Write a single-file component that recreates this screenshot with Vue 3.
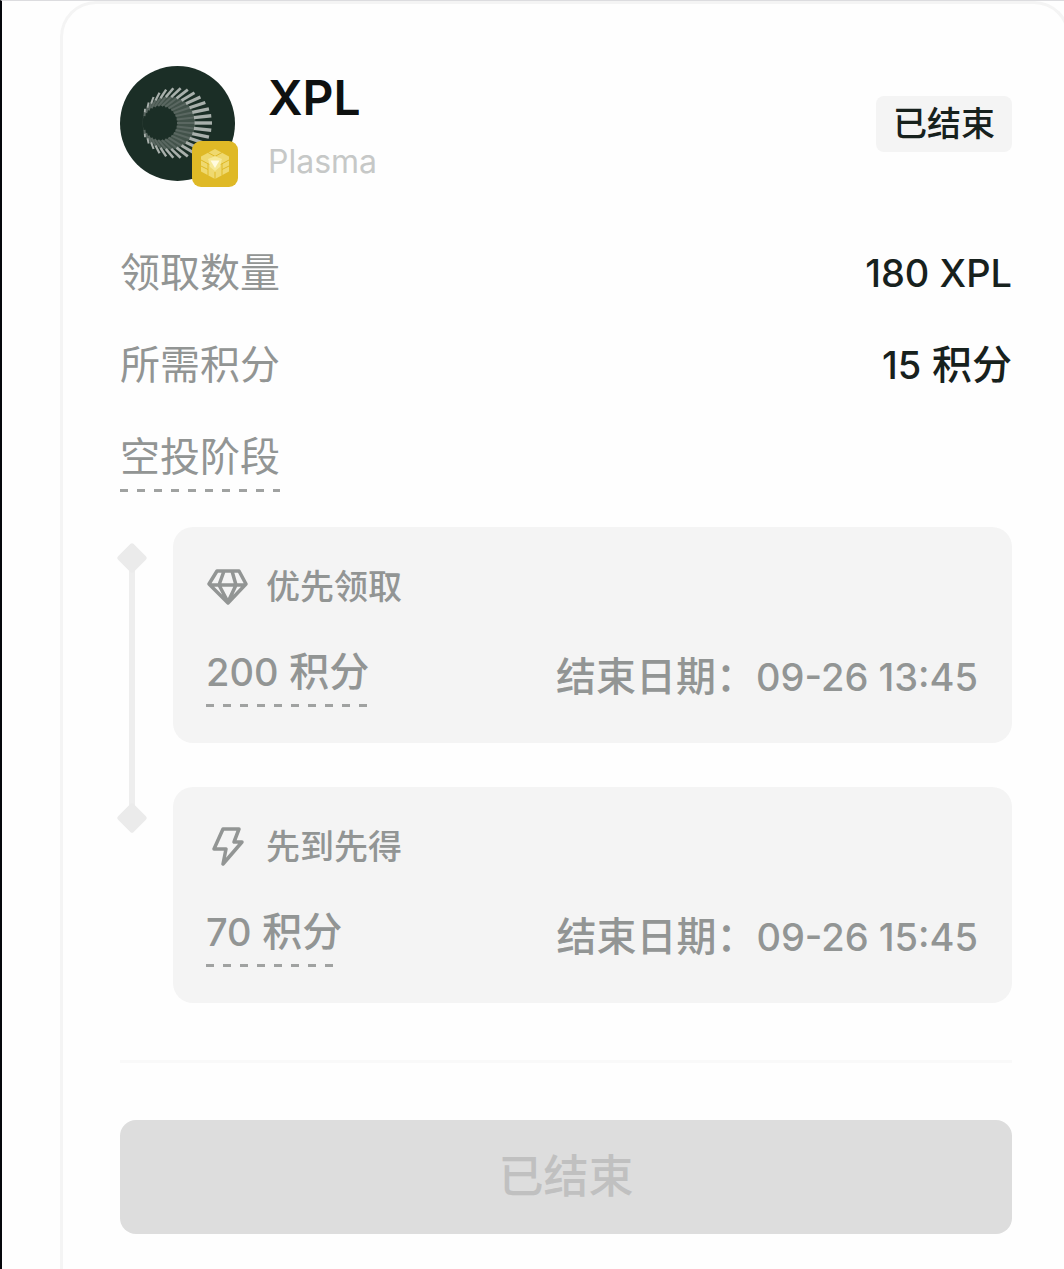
<script setup>
const token = { symbol: 'XPL', name: 'Plasma', status: '已结束' }

const stages = [
  { icon: 'diamond', title: '优先领取', points: 200, date: '09-26 13:45' },
  { icon: 'bolt', title: '先到先得', points: 70, date: '09-26 15:45' },
]

// each ray joins the same angle on the small inner and the bigger outer circle
const inner = { x: 40, r: 17 }
const outer = { x: 57, r: 35 }
const rays = []
for (let deg = -156; deg <= 156; deg += 12) {
  const a = (deg * Math.PI) / 180
  const at = (t) => {
    const x = inner.x + (outer.x - inner.x) * t
    const r = inner.r + (outer.r - inner.r) * t
    return `${(x + r * Math.cos(a)).toFixed(2)} ${(57 + r * Math.sin(a)).toFixed(2)}`
  }
  rays.push({
    deg,
    dim: `M${at(0)}L${at(0.5)}`,
    lit: `M${at(0.5)}L${at(1)}`,
    width: (2.6 + 0.8 * Math.cos(a)).toFixed(2),
  })
}
</script>

<template>
  <div class="page">
    <main class="card">
      <header class="head">
        <div class="avatar">
          <svg class="logo" viewBox="0 0 115 115" aria-hidden="true">
            <circle cx="57.5" cy="57.5" r="57.5" fill="#1b2e26" />
            <circle cx="49" cy="57" r="26.5" fill="#42524a" />
            <circle cx="40" cy="57" r="17.5" fill="#1b2e26" />
            <g fill="none">
              <path v-for="r in rays" :key="r.deg" :d="r.dim" stroke="#5a6761" stroke-width="2" />
              <path v-for="r in rays" :key="r.deg" :d="r.lit" stroke="#a9b0ac" :stroke-width="r.width" />
            </g>
          </svg>
          <svg class="chain" viewBox="0 0 46 46" aria-hidden="true">
            <rect width="46" height="46" rx="9" fill="#dfb926" />
            <path d="M23 8L37 15.500V30.500L23 38L9 30.500V15.500Z" fill="#efd96f" />
            <g fill="none" stroke="#dfb926" stroke-width="1">
              <path d="M9 19L23 26.500L37 19M23 31V38M16 11.500L29.500 19M30 11.500L16.500 19M16 23V34.500M30 23V34.500M9 25L16 28.500M37 25L30 28.500" />
            </g>
            <path d="M16 18L23 15L30 18L28 26L23 30L18 26Z" fill="#f6e998" />
            <path d="M18.500 19.500H27.500L23 27Z" fill="#fffbe0" />
          </svg>
        </div>
        <div class="names">
          <h1>{{ token.symbol }}</h1>
          <p>{{ token.name }}</p>
        </div>
        <span class="tag">{{ token.status }}</span>
      </header>

      <dl class="info">
        <div class="row">
          <dt>领取数量</dt>
          <dd><span class="num">180 XPL</span></dd>
        </div>
        <div class="row">
          <dt>所需积分</dt>
          <dd><span class="num">15</span> 积分</dd>
        </div>
      </dl>

      <h2 class="phase"><span class="dashed">空投阶段</span></h2>

      <ol class="stages">
        <li v-for="s in stages" :key="s.title" class="stage">
          <div class="rail"><i class="node"></i></div>
          <section class="box">
            <h3>
              <svg v-if="s.icon === 'diamond'" viewBox="0 0 42 42" aria-hidden="true">
                <path d="M11 5H33L40 18L22 37L3 18Z M4 19H39 M18 5L13 19L22 36L30 19L26 5" />
              </svg>
              <svg v-else viewBox="0 0 42 42" aria-hidden="true">
                <path d="M17 3H33L28 16H36L17 38L20 23H8Z" />
              </svg>
              {{ s.title }}
            </h3>
            <div class="line">
              <span class="dashed"><span class="num">{{ s.points }}</span> 积分</span>
              <span class="date">结束日期：<time class="num">{{ s.date }}</time></span>
            </div>
          </section>
        </li>
      </ol>

      <hr />

      <button type="button" class="claim" disabled>{{ token.status }}</button>
    </main>
  </div>
</template>

<style>
body {
  margin: 0;
  background: #fefefe;
}
</style>

<style scoped>
.page {
  box-sizing: border-box;
  min-height: 100vh;
  padding-left: 58px;
  border-top: 1px solid #dcdcdf;
  border-left: 2px solid #05070c;
  overflow: hidden;
  font-family: Inter, "Noto Sans CJK SC", sans-serif;
  font-size: 40px;
  font-weight: 400;
  line-height: 56px;
  color: #929594;
}
.card {
  box-sizing: border-box;
  min-height: 100vh;
  margin-right: -6px;
  padding: 51px 55px 32px 57px;
  border: 3px solid #f4f4f4;
  border-bottom: 0;
  border-radius: 36px 36px 0 0;
  background: #fefefe;
}
.num {
  font-size: 38px;
  line-height: 1;
}

/* header */
.head {
  display: flex;
  align-items: center;
  gap: 33px;
}
.avatar {
  position: relative;
  width: 115px;
  height: 115px;
}
.logo {
  display: block;
  width: 100%;
}
.chain {
  position: absolute;
  right: -3px;
  bottom: -6px;
  width: 46px;
}
.names {
  flex: 1;
  padding-top: 13px;
}
h1 {
  margin: 0 0 4px;
  font-size: 48px;
  font-weight: 600;
  line-height: 60px;
  color: #0e1110;
}
.names p {
  margin: 0;
  font-size: 32px;
  line-height: 60px;
  color: #c6c8c7;
}
.tag {
  padding: 0 17px;
  border-radius: 8px;
  background: #f4f4f4;
  font-size: 34px;
  font-weight: 500;
  color: #17211d;
}

/* token info */
.info {
  display: flex;
  flex-direction: column;
  gap: 36px;
  margin: 53px 0 36px;
}
.row {
  display: flex;
  justify-content: space-between;
}
dd {
  margin: 0;
  font-weight: 500;
  color: #17211d;
}
.phase {
  display: flex;
  margin: 0;
  font-size: 40px;
  font-weight: 400;
}
.dashed {
  padding-bottom: 7px;
  background: repeating-linear-gradient(to right, #a0a2a1 0 8px, transparent 8px 17px) left bottom / 100% 3px no-repeat;
}

/* stages */
.stages {
  margin: 35px 0 0;
  padding: 0;
  list-style: none;
}
.stage {
  display: flex;
  gap: 29px;
}
.rail {
  display: flex;
  flex-direction: column;
  align-items: center;
  width: 24px;
}
.rail::before,
.rail::after {
  content: '';
  width: 6px;
  background: #eee;
}
.rail::before {
  height: 20px;
}
.rail::after {
  flex: 1;
}
.stage:first-child .rail::before,
.stage:last-child .rail::after {
  background: none;
}
.node {
  width: 22px;
  height: 22px;
  border-radius: 2px;
  background: #ebebeb;
  transform: rotate(45deg);
}
.box {
  flex: 1;
  padding: 32px 34px 36px 33px;
  border-radius: 20px;
  background: #f4f4f4;
  font-weight: 500;
}
.stage:not(:last-child) .box {
  margin-bottom: 44px;
}
h3 {
  display: flex;
  align-items: center;
  gap: 18px;
  margin: 0;
  font-size: 34px;
  font-weight: 500;
}
h3 svg {
  width: 42px;
  height: 42px;
  fill: none;
  stroke: currentColor;
  stroke-width: 3.5;
  stroke-linejoin: round;
}
.line {
  display: flex;
  align-items: flex-end;
  justify-content: space-between;
  margin-top: 29px;
}
.date {
  padding-bottom: 2px;
}

hr {
  height: 3px;
  margin: 57px 0;
  border: 0;
  background: #f9f9f9;
}
.claim {
  display: block;
  width: 100%;
  padding: 29px;
  border: 0;
  border-radius: 16px;
  background: #ddd;
  font: inherit;
  font-size: 45px;
  font-weight: 500;
  color: #c0c0c0;
}
</style>
